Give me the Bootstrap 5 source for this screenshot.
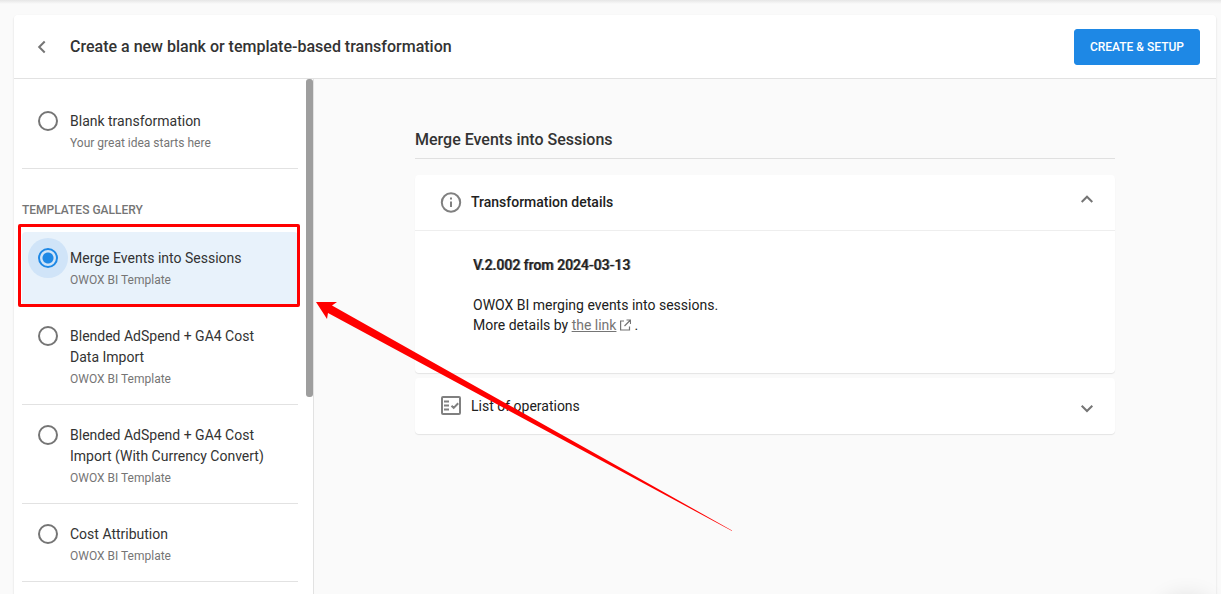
<!DOCTYPE html>
<html lang="en">
<head>
<meta charset="utf-8">
<meta name="viewport" content="width=device-width, initial-scale=1">
<title>Create transformation</title>
<link href="https://cdn.jsdelivr.net/npm/bootstrap@5.3.0/dist/css/bootstrap.min.css" rel="stylesheet">
<style>
  body { font-family: Roboto, "Liberation Sans", sans-serif; font-size: 14px; line-height: 20px; color: #212121; background: #fafafa; }
  .page { height: 100vh; padding: 15px 5px 0 14px; background: linear-gradient(#e6e6e6, #fafafa 4px); overflow: hidden; }
  .panel { background: #fafafa; border-radius: 4px 4px 0 0; box-shadow: 0 1px 2px rgba(0,0,0,.16); min-height: 0; }
  .panel-head { background: #fff; height: 64px; border-bottom: 1px solid #e2e2e2; border-radius: 4px 4px 0 0; padding: 0 16px; }
  .back-btn { width: 24px; height: 24px; }
  .head-title, .section-title { font-size: 16px; line-height: 24px; font-weight: 500; color: #333; }
  .head-title { margin-left: 16px; }
  .btn-setup { --bs-btn-bg: #1e88e5; --bs-btn-border-color: #1e88e5; --bs-btn-color: #fff; --bs-btn-hover-bg: #1976d2; --bs-btn-hover-color: #fff; height: 36px; padding: 0 15px; font-size: 12px; font-weight: 500; border-radius: 3px; }
  .panel-body { min-height: 0; }
  .gallery { width: 300px; background: #fff; border-right: 1px solid #e2e2e2; padding: 16px 15px 0 8px; }
  .scroll-thumb { top: 0; right: 0; width: 7px; height: 318px; border-radius: 3px; background: #9e9e9e; }
  .template { margin-top: 4px; padding: 16px 20px 14px 16px; gap: 12px; border-bottom: 1px solid #e2e2e2; cursor: pointer; }
  .template .form-check-input { width: 20px; height: 20px; margin: 0; border: 2px solid #757575; background: #fff; box-shadow: none; }
  .template .form-check-input:checked { border-color: #1e88e5; background: radial-gradient(circle, #1e88e5 5px, #d0e4f8 6px); box-shadow: 0 0 0 10px #d0e4f8; }
  .template-chosen { background: #e8f2fb; border-radius: 4px; }
  .t-name { line-height: 21px; color: #333; }
  .t-note { font-size: 12px; line-height: 22px; color: #757575; }
  .gallery-title { font-size: 12px; line-height: 20px; font-weight: 500; color: #757575; margin: 31px 0 0; padding-bottom: 8px; }
  .callout { inset: -8px -2px -2px -4px; border: 3px solid #f00; border-radius: 2px; pointer-events: none; }
  .details { max-width: 700px; margin-top: 49px; }
  .section-title { margin: 0; padding-bottom: 6px; border-bottom: 1px solid #e0e0e0; }
  .fold { background: #fff; border-radius: 4px; box-shadow: 0 1px 1px rgba(0,0,0,.09); }
  .fold + .fold { margin-top: 5px; }
  .fold-head { width: 100%; height: 56px; padding: 0 16px 0 24px; border: 0; background: none; color: #212121; text-align: left; }
  .fold-head svg:first-child { margin-right: 8px; }
  .fold-open { font-weight: 500; padding-bottom: 2px; border-bottom: 1px solid #eee; }
  .fold-text { padding: 24px 58px 38px; }
  .version { font-weight: 500; text-shadow: 1px 0 0 rgba(33,33,33,.55); margin: 0 0 20px; }
  .ink-link { color: #757575; }
  .arrow-note { top: 0; left: 0; pointer-events: none; }
  .chat-shadow { right: 4px; bottom: -64px; width: 60px; height: 60px; box-shadow: 0 0 24px rgba(0,0,0,.14); }
</style>
</head>
<body class="overflow-hidden">
<div class="page d-flex flex-column position-relative">
  <main class="panel d-flex flex-column flex-grow-1">
    <header class="panel-head d-flex align-items-center flex-shrink-0">
      <button type="button" class="back-btn btn p-0 border-0 d-flex" aria-label="Back">
        <svg width="24" height="24" viewBox="0 0 24 24" fill="none" stroke="#757575" stroke-width="2"><path d="M14.700 6.500L9.200 12l5.500 5.500"/></svg>
      </button>
      <h1 class="head-title mb-0 me-auto">Create a new blank or template-based transformation</h1>
      <button type="button" class="btn btn-setup">CREATE &amp; SETUP</button>
    </header>
    <div class="panel-body d-flex flex-grow-1 overflow-hidden">
      <aside class="gallery flex-shrink-0 position-relative overflow-hidden">
        <div class="scroll-thumb position-absolute"></div>
        <label class="template d-flex mt-0">
          <input class="form-check-input flex-shrink-0" type="radio" name="template">
          <span><span class="t-name d-block">Blank transformation</span><span class="t-note d-block">Your great idea starts here</span></span>
        </label>
        <h2 class="gallery-title">TEMPLATES GALLERY</h2>
        <label class="template template-chosen d-flex position-relative">
          <input class="form-check-input flex-shrink-0" type="radio" name="template" checked>
          <span><span class="t-name d-block">Merge Events into Sessions</span><span class="t-note d-block">OWOX BI Template</span></span>
          <span class="callout position-absolute"></span>
        </label>
        <label class="template d-flex">
          <input class="form-check-input flex-shrink-0" type="radio" name="template">
          <span><span class="t-name d-block">Blended AdSpend + GA4 Cost Data Import</span><span class="t-note d-block">OWOX BI Template</span></span>
        </label>
        <label class="template d-flex">
          <input class="form-check-input flex-shrink-0" type="radio" name="template">
          <span><span class="t-name d-block">Blended AdSpend + GA4 Cost Import (With Currency Convert)</span><span class="t-note d-block">OWOX BI Template</span></span>
        </label>
        <label class="template d-flex">
          <input class="form-check-input flex-shrink-0" type="radio" name="template">
          <span><span class="t-name d-block">Cost Attribution</span><span class="t-note d-block">OWOX BI Template</span></span>
        </label>
      </aside>
      <div class="flex-grow-1">
        <section class="details mx-auto">
          <h2 class="section-title">Merge Events into Sessions</h2>
          <div class="fold mt-3">
            <button type="button" class="fold-head fold-open d-flex align-items-center" aria-expanded="true">
              <svg width="24" height="24" viewBox="0 0 24 24" fill="none" stroke="#808080" stroke-width="2"><circle cx="12" cy="12.500" r="9.200"/><path d="M12 11.500v5.500M12 7.500v2"/></svg>
              <span class="me-auto">Transformation details</span>
              <svg width="24" height="24" viewBox="0 0 24 24" fill="none" stroke="#757575" stroke-width="2"><path d="M6.700 12l5.300-5.300 5.300 5.300"/></svg>
            </button>
            <div class="fold-text">
              <p class="version">V.2.002 from 2024-03-13</p>
              <p class="mb-0">OWOX BI merging events into sessions.<br>More details by <a class="ink-link" href="#">the link</a> <svg class="align-text-top" width="11" height="16" viewBox="0 0 11 16" fill="none" stroke="#757575" stroke-width="1.200"><path d="M4 4H.600v9h8.900V9.500M6.500 3h4v4M10.500 3L4.500 9"/></svg> .</p>
            </div>
          </div>
          <div class="fold">
            <button type="button" class="fold-head d-flex align-items-center" aria-expanded="false">
              <svg width="24" height="24" viewBox="0 0 24 24" fill="none" stroke="#808080" stroke-width="2"><rect x="3" y="3" width="18" height="17" rx="1"/><path d="M5 7.500h5M5 11.500h5M5 15.500h5M12.500 11.700l2.200 2.200 4.500-4.700"/></svg>
              <span class="me-auto">List of operations</span>
              <svg width="24" height="24" viewBox="0 0 24 24" fill="none" stroke="#757575" stroke-width="2"><path d="M6.700 11.700l5.300 5.300 5.300-5.300"/></svg>
            </button>
          </div>
        </section>
      </div>
    </div>
  </main>
  <svg class="arrow-note position-absolute" width="740" height="540" viewBox="0 0 740 540" fill="#f00" aria-hidden="true"><path d="M316 302H337L332 305.500L732 530.500V531L328 313L327 319Z"/></svg>
  <div class="chat-shadow position-absolute rounded-circle"></div>
</div>
<script src="https://cdn.jsdelivr.net/npm/bootstrap@5.3.0/dist/js/bootstrap.bundle.min.js"></script>
</body>
</html>
